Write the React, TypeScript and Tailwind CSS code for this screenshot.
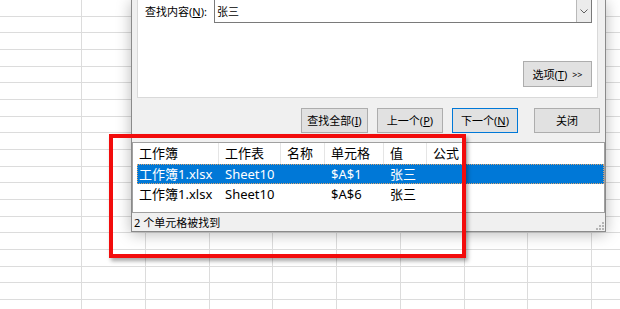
import React from 'react';

const sheetRows = Array.from({ length: 19 });
const sheetCols = Array.from({ length: 9 });

const columns = [
  { label: '工作簿', w: 'w-[86px]' },
  { label: '工作表', w: 'w-[62px]' },
  { label: '名称', w: 'w-[44px]' },
  { label: '单元格', w: 'w-[59px]' },
  { label: '值', w: 'w-[43px]' },
  { label: '公式', w: 'w-[40px]' },
];

const results = [
  { book: '工作簿1.xlsx', sheet: 'Sheet10', name: '', cell: '$A$1', value: '张三', selected: true },
  { book: '工作簿1.xlsx', sheet: 'Sheet10', name: '', cell: '$A$6', value: '张三', selected: false },
];

const Sheet: React.FC = () => (
  <div className="flex flex-col">
    {sheetRows.map((_, r) => (
      <div key={r} className="flex h-[16.667px] shrink-0 border-b border-[#dcdcdc]">
        <div className="w-[82px] shrink-0 border-r border-[#dcdcdc]" />
        {sheetCols.map((_, c) => (
          <div key={c} className="w-[63.75px] shrink-0 border-r border-[#dcdcdc]" />
        ))}
      </div>
    ))}
  </div>
);

const DlgButton: React.FC<{ children: React.ReactNode; className?: string; focused?: boolean }> = ({ children, className = '', focused }) => (
  <button
    className={`h-[25px] w-[66px] flex items-center justify-center border bg-[#e1e1e1] text-[11px] leading-none text-black ${
      focused ? 'border-[#0078d7]' : 'border-[#adadad]'
    } ${className}`}
  >
    {children}
  </button>
);

const App: React.FC = () => {
  return (
    <div className="relative w-[620px] h-[309px] overflow-hidden bg-white font-['Noto_Sans','Noto_Sans_CJK_SC',sans-serif] text-black">
      <Sheet />

      {/* find dialog */}
      <div className="absolute left-[131px] top-0 w-[475px] h-[232px] flex flex-col bg-[#f0f0f0] border border-t-0 border-[#8a8a8a] shadow-[0_2px_14px_rgba(0,0,0,0.28)]">
        <div className="ml-[5px] mr-[7px] h-[98px] flex flex-col bg-white border border-t-0 border-[#d9d9d9] pl-[7px] pr-[5px]">
          <div className="flex items-center h-[23px]">
            <span className="w-[69px] text-[11px] leading-none">
              查找内容(<u>N</u>):
            </span>
            <div className="flex-1 h-[23px] flex border border-t-0 border-[#7a7a7a]">
              <div className="flex-1 flex items-center pl-[2px] text-[11px] leading-none">张三</div>
              <div className="w-[15px] flex items-center justify-center bg-[#ececec] border-l border-[#b9b9b9]">
                <svg width="8" height="5" viewBox="0 0 8 5">
                  <polyline points="0.5,0.5 4,4 7.5,0.5" fill="none" stroke="#606060" strokeWidth="1" />
                </svg>
              </div>
            </div>
          </div>
          <div className="mt-[38px] flex justify-end">
            <button className="h-[26px] w-[69px] flex items-center justify-center gap-[5px] border border-[#adadad] bg-[#e1e1e1] text-[11px] leading-none">
              <span>
                选项(<u>T</u>)
              </span>
              <span className="text-[9px]">&gt;&gt;</span>
            </button>
          </div>
        </div>

        <div className="mt-[10px] flex justify-end pr-[5px]">
          <DlgButton className="w-[67px]">
            查找全部(<u>I</u>)
          </DlgButton>
          <DlgButton className="ml-[9px]">
            上一个(<u>P</u>)
          </DlgButton>
          <DlgButton className="ml-[9px]" focused>
            下一个(<u>N</u>)
          </DlgButton>
          <DlgButton className="ml-[16px]">关闭</DlgButton>
        </div>

        <div className="mt-[9px] h-[71px] flex flex-col bg-white border border-[#a0a0a0]">
          <div className="flex h-[21px] shrink-0">
            {columns.map((c) => (
              <div key={c.label} className={`${c.w} shrink-0 flex items-center pl-[6px] border-r border-[#e5e5e5] text-[13px] leading-none`}>
                {c.label}
              </div>
            ))}
          </div>
          {results.map((r, i) => (
            <div
              key={i}
              className={`ml-[4px] h-[20px] shrink-0 flex items-center text-[13px] leading-none ${
                r.selected ? 'bg-[#0078d7] text-white outline-1 outline-dotted -outline-offset-1 outline-[#d9a470]' : ''
              }`}
            >
              <div className="w-[82px] shrink-0 pl-[2px]">{r.book}</div>
              <div className="w-[62px] shrink-0 pl-[6px]">{r.sheet}</div>
              <div className="w-[44px] shrink-0 pl-[6px]">{r.name}</div>
              <div className="w-[59px] shrink-0 pl-[6px]">{r.cell}</div>
              <div className="w-[43px] shrink-0 pl-[6px]">{r.value}</div>
            </div>
          ))}
        </div>

        <div className="relative h-[18px] flex items-center pl-[2px] text-[11px] leading-none">
          2 个单元格被找到
          <svg className="absolute right-[1px] bottom-[1px]" width="8" height="8" viewBox="0 0 8 8" fill="#b5b5b5">
            <rect x="6" y="0" width="2" height="2" />
            <rect x="3" y="3" width="2" height="2" />
            <rect x="6" y="3" width="2" height="2" />
            <rect x="0" y="6" width="2" height="2" />
            <rect x="3" y="6" width="2" height="2" />
            <rect x="6" y="6" width="2" height="2" />
          </svg>
        </div>
      </div>

      {/* red highlight */}
      <div className="absolute left-[109px] top-[134px] w-[357px] h-[124px] border-4 border-[#f20c0c] shadow-[2px_3px_4px_rgba(0,0,0,0.35)]" />
    </div>
  );
};

export default App;
